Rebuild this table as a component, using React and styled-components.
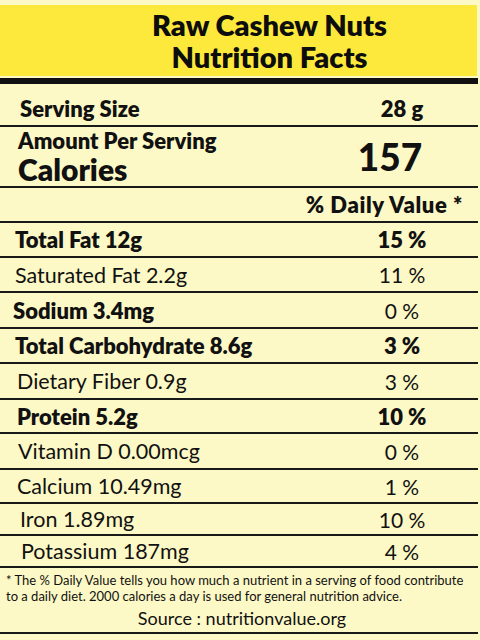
import React from "react";
import styled, { createGlobalStyle } from "styled-components";

const Global = createGlobalStyle`
  html, body { margin: 0; padding: 0; background: #fdf9c6; }
  body { font-family: Lato, "Noto Sans", sans-serif; color: #111; }
`;

const Page = styled.div`
  width: 480px;
  height: 640px;
  background: #fdf9c6;
  display: flex;
  flex-direction: column;
  padding-top: 5px;
  box-sizing: border-box;
  overflow: hidden;
`;

const Banner = styled.header`
  width: 477px;
  height: 71px;
  background: #fde93c;
  display: flex;
  flex-direction: column;
  align-items: center;
  justify-content: center;
  padding-left: 62px;
  box-sizing: border-box;
`;

const Title = styled.h1`
  margin: 0;
  font-size: 29px;
  line-height: 32px;
  font-weight: 800;
  text-align: center;
  color: #0d0d0d;
`;

const ThickRule = styled.div`
  width: 478px;
  height: 6px;
  margin-top: 2px;
  background: #111;
`;

const Row = styled.div`
  width: 478px;
  height: ${(p) => p.$h}px;
  box-sizing: border-box;
  border-bottom: 2px solid #1a1a1a;
  display: flex;
  align-items: center;
  padding-top: ${(p) => p.$pt || 0}px;
`;

const Label = styled.div`
  flex: 1;
  padding-left: ${(p) => p.$indent}px;
  font-size: ${(p) => (p.$bold ? 22 : 21.5)}px;
  font-weight: ${(p) => (p.$bold ? 800 : 400)};
  white-space: nowrap;
`;

const Value = styled.div`
  width: 84px;
  margin-right: 34px;
  margin-left: ${(p) => p.$shift || 0}px;
  text-align: center;
  font-size: ${(p) => (p.$bold ? 22 : 21)}px;
  font-weight: ${(p) => (p.$bold ? 800 : 400)};
  white-space: nowrap;
`;

const AmountBlock = styled.div`
  flex: 1;
  padding-left: 18px;
  display: flex;
  flex-direction: column;
`;

const AmountLine = styled.div`
  font-size: 22px;
  font-weight: 800;
  line-height: 26px;
`;

const CaloriesLine = styled.div`
  font-size: 30px;
  font-weight: 800;
  line-height: 34px;
  margin-top: -2px;
`;

const BigNumber = styled.div`
  width: 84px;
  margin-right: 46px;
  text-align: center;
  font-size: 37px;
  font-weight: 900;
  line-height: 44px;
`;

const DVHead = styled.div`
  flex: 1;
  text-align: right;
  padding-right: 15px;
  font-size: 22px;
  font-weight: 800;
  letter-spacing: 0.6px;
`;

const Footer = styled.footer`
  width: 478px;
  height: 66px;
  box-sizing: border-box;
  border-bottom: 2px solid #1a1a1a;
  display: flex;
  flex-direction: column;
  padding-top: 4px;
`;

const Note = styled.p`
  margin: 0;
  padding-left: 6px;
  width: 468px;
  box-sizing: border-box;
  font-size: 13px;
  line-height: 16px;
  color: #111;
`;

const Source = styled.div`
  margin-top: 3px;
  text-align: center;
  padding-left: 6px;
  font-size: 18px;
  line-height: 22px;
`;

const rows = [
  { label: "Total Fat 12g", value: "15 %", bold: true, indent: 15, h: 35, shift: 4 },
  { label: "Saturated Fat 2.2g", value: "11 %", bold: false, indent: 15, h: 35 },
  { label: "Sodium 3.4mg", value: "0 %", bold: true, vb: false, indent: 13, h: 36 },
  { label: "Total Carbohydrate 8.6g", value: "3 %", bold: true, indent: 15, h: 35, shift: 2 },
  { label: "Dietary Fiber 0.9g", value: "3 %", bold: false, indent: 17, h: 36 },
  { label: "Protein 5.2g", value: "10 %", bold: true, indent: 17, h: 34, shift: 9 },
  { label: "Vitamin D 0.00mcg", value: "0 %", bold: false, indent: 18, h: 36, shift: 2 },
  { label: "Calcium 10.49mg", value: "1 %", bold: false, indent: 17, h: 34 },
  { label: "Iron 1.89mg", value: "10 %", bold: false, indent: 20, h: 32, shift: 4 },
  { label: "Potassium 187mg", value: "4 %", bold: false, indent: 21, h: 32 },
];

export default function App() {
  return (
    <>
      <Global />
      <Page>
        <Banner>
          <Title>
            Raw Cashew Nuts
            <br />
            Nutrition Facts
          </Title>
        </Banner>
        <ThickRule />
        <Row $h={43} $pt={8}>
          <Label $bold $indent={20}>Serving Size</Label>
          <Value $bold $shift={-4}>28 g</Value>
        </Row>
        <Row $h={61}>
          <AmountBlock>
            <AmountLine>Amount Per Serving</AmountLine>
            <CaloriesLine>Calories</CaloriesLine>
          </AmountBlock>
          <BigNumber>157</BigNumber>
        </Row>
        <Row $h={35}>
          <DVHead>% Daily Value *</DVHead>
        </Row>
        {rows.map((r) => (
          <Row key={r.label} $h={r.h}>
            <Label $bold={r.bold} $indent={r.indent}>{r.label}</Label>
            <Value $bold={r.vb ?? r.bold} $shift={r.shift}>{r.value}</Value>
          </Row>
        ))}
        <Footer>
          <Note>
            * The % Daily Value tells you how much a nutrient in a serving of food contribute
            to a daily diet. 2000 calories a day is used for general nutrition advice.
          </Note>
          <Source>Source : nutritionvalue.org</Source>
        </Footer>
      </Page>
    </>
  );
}
